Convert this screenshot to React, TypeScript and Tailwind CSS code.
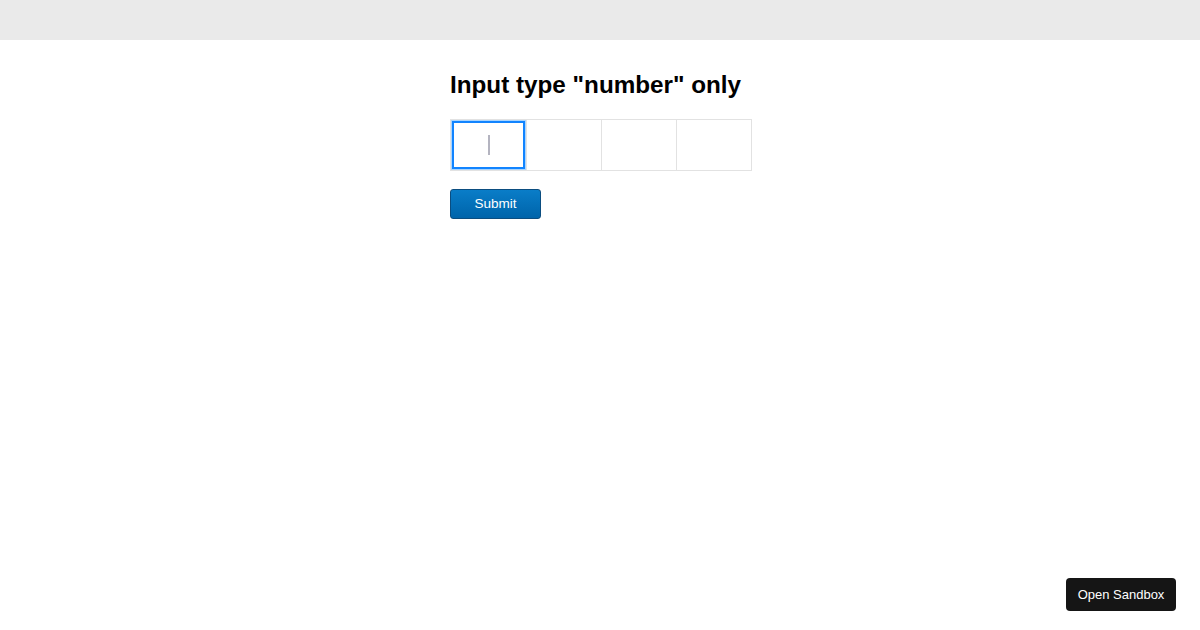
import React from "react";

const App = () => {
  const boxes = [0, 1, 2, 3];

  return (
    <div className="relative min-h-[630px] bg-white font-['Liberation_Sans',Arial,sans-serif] text-black">
      <div className="h-10 bg-[#eaeaea]" />

      <div className="mx-auto w-[300px] pt-[27px]">
        <h2 className="text-[24.25px] font-bold leading-[36px]">Input type "number" only</h2>

        <div className="mt-[16px] flex">
          {boxes.map((i) => (
            <div
              key={i}
              className={
                i === 0
                  ? "flex h-[52px] w-[77px] shrink-0 items-center justify-center border border-[#e2e2e2] shadow-[inset_0_0_0_1px_#a9d5ff,inset_0_0_0_3px_#1184ff]"
                  : "-ml-px h-[52px] w-[76px] shrink-0 border border-[#e2e2e2]"
              }
            >
              {i === 0 && <span className="h-[20px] w-[2px] bg-[#b4b4c0]" />}
            </div>
          ))}
        </div>

        <button className="mt-[18px] h-[30px] w-[91px] rounded-[3px] border border-[#0b4d80] bg-gradient-to-b from-[#0a7dc8] to-[#0064aa] text-[13.5px] text-white">
          Submit
        </button>
      </div>

      <div className="absolute bottom-[19px] right-[24px] flex h-[33px] w-[110px] items-center justify-center rounded-[4px] bg-[#151515] text-[13px] text-white">
        Open Sandbox
      </div>
    </div>
  );
};

export default App;
